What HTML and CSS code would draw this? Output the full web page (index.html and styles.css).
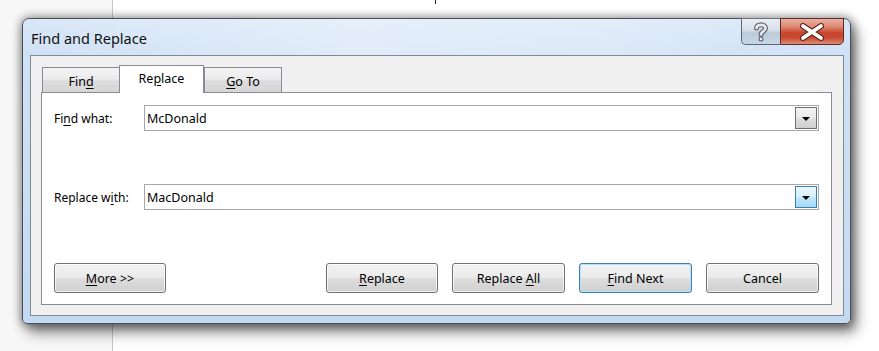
FILE: index.html
```html
<!DOCTYPE html>
<html>
<head>
<meta charset="utf-8">
<link rel="stylesheet" href="styles.css">
</head>
<body>
<div class="page">
  <span class="tick"></span>
  <div class="window">
    <div class="titlebar">
      <div class="title">Find and Replace</div>
      <div class="controls">
        <div class="ctl help">
          <svg width="20" height="22" viewBox="0 0 20 22">
            <path d="M5.5 7 C5.5 3 14.5 2.6 14.5 7.2 C14.5 10.3 10 10.4 10 13.4" fill="none" stroke="#59626e" stroke-width="5" stroke-linecap="round"/>
            <circle cx="10" cy="18" r="2.5" fill="#59626e"/>
            <path d="M5.5 7 C5.5 3 14.5 2.6 14.5 7.2 C14.5 10.3 10 10.4 10 13.4" fill="none" stroke="#e6eaef" stroke-width="2.8" stroke-linecap="round"/>
            <circle cx="10" cy="18" r="1.4" fill="#e6eaef"/>
          </svg>
        </div>
        <div class="ctl close">
          <svg width="28" height="18" viewBox="0 0 28 18">
            <path d="M5 3 L23 15 M23 3 L5 15" fill="none" stroke="#5a2b22" stroke-width="6" stroke-linecap="round"/>
            <path d="M5 3 L23 15 M23 3 L5 15" fill="none" stroke="#ffffff" stroke-width="3.8" stroke-linecap="round"/>
          </svg>
        </div>
      </div>
    </div>
    <div class="client">
      <div class="tabs">
        <div class="tab">Fin<u>d</u></div>
        <div class="tab active">Re<u>p</u>lace</div>
        <div class="tab"><u>G</u>o To</div>
      </div>
      <div class="panel">
        <div class="row row-find">
          <label class="label">Fi<u>n</u>d what:</label>
          <div class="combo">
            <span class="value">McDonald</span>
            <span class="drop"><span class="arrow"></span></span>
          </div>
        </div>
        <div class="row row-replace">
          <label class="label">Replace w<u>i</u>th:</label>
          <div class="combo">
            <span class="value">MacDonald</span>
            <span class="drop hot"><span class="arrow"></span></span>
          </div>
        </div>
        <div class="buttons">
          <button class="btn"><u>M</u>ore &gt;&gt;</button>
          <div class="spacer"></div>
          <button class="btn"><u>R</u>eplace</button>
          <button class="btn">Replace <u>A</u>ll</button>
          <button class="btn default"><u>F</u>ind Next</button>
          <button class="btn">Cancel</button>
        </div>
      </div>
    </div>
  </div>
</div>
</body>
</html>
```
FILE: styles.css
```css
html, body {
  margin: 0;
  padding: 0;
}
body {
  width: 879px;
  height: 351px;
  overflow: hidden;
  font-family: "Noto Sans", "Open Sans", sans-serif;
  font-size: 12px;
  color: #000;
  background:
    linear-gradient(to right, #f7f7f7 0, #f7f7f7 112px, #c9c9c9 112px, #c9c9c9 113px, #ffffff 113px);
}
.page {
  position: relative;
  padding: 18px 0 0 22px;
}
.tick {
  position: absolute;
  left: 435px;
  top: 0;
  width: 1px;
  height: 4px;
  background: #222;
}
.window {
  box-sizing: border-box;
  width: 829px;
  height: 306px;
  border: 1px solid #4a4f57;
  border-radius: 7px 7px 5px 5px;
  background: linear-gradient(to bottom, #d9e7f7 0, #cfe1f5 36px, #c4daf2 100%);
  box-shadow: 0 0 9px 2px rgba(0, 0, 0, 0.35), 5px 8px 14px rgba(0, 0, 0, 0.5);
  display: flex;
  flex-direction: column;
}
.titlebar {
  height: 36px;
  display: flex;
  align-items: flex-start;
  justify-content: space-between;
  padding: 0 6px 0 8px;
  background: linear-gradient(to right, rgba(255,255,255,0) 0, rgba(255,255,255,0.35) 40%, rgba(255,255,255,0.25) 70%, rgba(255,255,255,0) 100%);
  border-radius: 6px 6px 0 0;
}
.title {
  font-size: 14.5px;
  line-height: 20px;
  margin-top: 9px;
  color: #111;
}
.controls {
  display: flex;
  margin-top: -1px;
}
.ctl {
  box-sizing: border-box;
  height: 27px;
  display: flex;
  align-items: center;
  justify-content: center;
  border: 1px solid #5d6672;
  border-top: 1px solid #6d7480;
}
.help {
  width: 39px;
  border-right: none;
  border-radius: 0 0 0 5px;
  background: linear-gradient(to bottom, #e9eef4 0, #d6dee8 45%, #bccad9 55%, #c9d6e3 100%);
}
.close {
  width: 64px;
  border-color: #5c2c24;
  border-radius: 0 0 5px 0;
  background: linear-gradient(to bottom, #eab0a2 0, #de8a76 30%, #c9462e 55%, #c84a33 75%, #e08c78 100%);
}
.client {
  flex: 1;
  margin: 0 6px 7px 7px;
  border: 1px solid #848a93;
  background: #f0f0f0;
  padding: 9px 11px 10px 10px;
  display: flex;
  flex-direction: column;
}
.tabs {
  display: flex;
  align-items: flex-end;
  height: 27px;
  padding-left: 1px;
  position: relative;
  z-index: 1;
}
.tab {
  box-sizing: border-box;
  height: 25px;
  border: 1px solid #898c95;
  border-bottom: none;
  background: linear-gradient(to bottom, #f3f3f3 0, #ebebeb 45%, #dcdcdc 55%, #d6d6d6 100%);
  display: flex;
  align-items: center;
  justify-content: center;
  width: 78px;
  font-size: 12.5px;
  padding-top: 2px;
}
.tab.active {
  width: 85px;
  height: 28px;
  margin-bottom: -1px;
  background: #fff;
  padding-top: 0;
  padding-bottom: 2px;
}
.tab + .tab {
  margin-left: -1px;
}
.tab.active + .tab {
  margin-left: 0;
}
.panel {
  flex: 1;
  background: #fff;
  border: 1px solid #898c95;
  padding: 12px 12px 0 12px;
  display: flex;
  flex-direction: column;
}
.row {
  display: flex;
  align-items: center;
}
.row-replace {
  margin-top: 53px;
}
.label {
  width: 90px;
}
.combo {
  box-sizing: border-box;
  flex: 1;
  height: 26px;
  border: 1px solid #a7a7a7;
  display: flex;
  align-items: center;
  padding: 1px;
}
.value {
  flex: 1;
  padding-left: 1px;
  font-size: 12.5px;
}
.drop {
  box-sizing: border-box;
  width: 22px;
  height: 22px;
  border: 1px solid #707070;
  background: linear-gradient(to bottom, #f2f2f2 0, #ebebeb 45%, #dddddd 55%, #cfcfcf 100%);
  display: flex;
  align-items: center;
  justify-content: center;
}
.drop.hot {
  border-color: #3c7fb1;
  background: linear-gradient(to bottom, #eaf6fd 0, #d9f0fc 45%, #bee6fd 55%, #a7d9f5 100%);
}
.arrow {
  width: 0;
  height: 0;
  border-left: 4px solid transparent;
  border-right: 4px solid transparent;
  border-top: 4px solid #000;
  margin-top: 1px;
}
.buttons {
  display: flex;
  gap: 14px;
  margin-top: 53px;
}
.spacer {
  flex: 1;
}
.btn {
  box-sizing: border-box;
  width: 112px;
  height: 30px;
  font-family: inherit;
  font-size: 12.5px;
  color: #000;
  border: 1px solid #707070;
  border-radius: 3px;
  background: linear-gradient(to bottom, #f2f2f2 0, #ebebeb 45%, #dddddd 55%, #cfcfcf 100%);
  box-shadow: inset 0 0 0 1px rgba(255,255,255,0.7);
  padding: 0;
}
.btn + .btn {
  width: 113px;
}
.btn.default {
  border-color: #3c7fb1;
  box-shadow: inset 0 0 0 1px #b8e2f9;
}
u {
  text-decoration-thickness: 1px;
  text-underline-offset: 2px;
}
```
